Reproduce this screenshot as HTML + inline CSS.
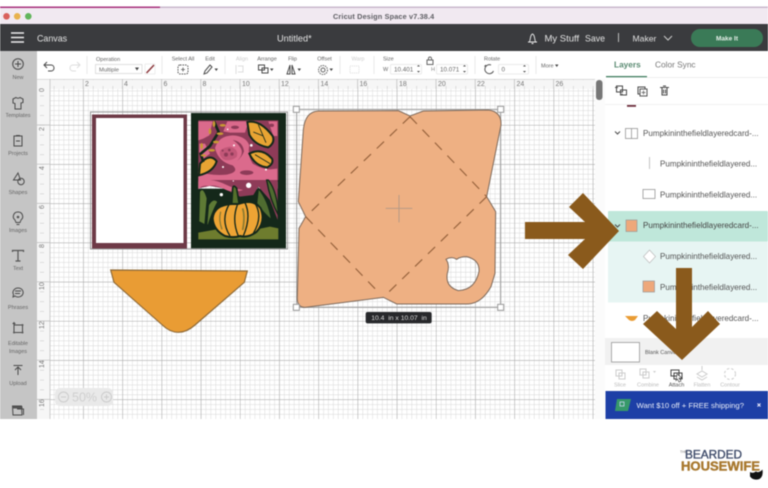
<!DOCTYPE html>
<html><head><meta charset="utf-8"><style>
html,body{margin:0;padding:0;background:#fff;width:768px;height:488px;overflow:hidden}
svg{display:block;filter:blur(.5px)}
text{font-family:"Liberation Sans",sans-serif}
.l{font-size:5.5px;fill:#666}
.s{font-size:5.5px;fill:#666;text-anchor:middle}
.r{font-size:7px;fill:#777}
.p{font-size:8.1px;fill:#555}
.i{fill:none;stroke:#4a4a4a;stroke-width:1}
.t{fill:none;stroke:#666;stroke-width:1}
</style></head><body>
<svg width="768" height="488" viewBox="0 0 768 488" xmlns="http://www.w3.org/2000/svg">
<defs>
<pattern id="mi" x="44" y="85.8" width="4.9" height="4.9" patternUnits="userSpaceOnUse"><path d="M0 0H4.9M0 0V4.9" stroke="#d6d6d6" stroke-width=".9" fill="none"/></pattern>
<pattern id="mj" x="44" y="85.8" width="39.2" height="39.2" patternUnits="userSpaceOnUse"><path d="M0 0H39.2M0 0V39.2" stroke="#a8a8a8" stroke-width="1" fill="none"/></pattern>
<pattern id="tx" x="44" y="80" width="9.8" height="10" patternUnits="userSpaceOnUse"><path d="M0 6V10" stroke="#b8b8b8" stroke-width=".8"/></pattern>
<pattern id="ty" x="44" y="85.8" width="10" height="9.8" patternUnits="userSpaceOnUse"><path d="M6 0H10" stroke="#b8b8b8" stroke-width=".8"/></pattern>
</defs>
<rect width="768" height="488" fill="#fff"/>
<!-- title bar -->
<rect y="7" width="768" height="17" fill="#f1e9f1"/>
<rect y="6.500" width="160" height="1.500" fill="#a8307c"/>
<rect x="160" y="6.500" width="608" height="1.500" fill="#c9b8cc"/>
<circle cx="6.500" cy="16.300" r="3.300" fill="#d9605c"/><circle cx="17.200" cy="16.300" r="3.300" fill="#e8b24e"/><circle cx="28.300" cy="16.300" r="3.300" fill="#62b55c"/>
<text x="333" y="19" font-size="7.300" font-weight="bold" fill="#5f5f64" letter-spacing=".15">Cricut Design Space  v7.38.4</text>
<!-- header -->
<rect y="24" width="768" height="27" fill="#3a3b3e"/>
<path d="M11 33H24M11 37.500H24M11 42H24" stroke="#eee" stroke-width="1.600"/>
<text x="37" y="41.500" font-size="8.900" fill="#e2e2e2">Canvas</text>
<text x="277" y="41.500" font-size="9.200" fill="#e2e2e2">Untitled*</text>
<path d="M528 42h9M529.500 41.500c1-1 .5-7 3-7.500 2.500.5 2 6.500 3 7.500M531.500 43.500h2" fill="none" stroke="#eee" stroke-width=".9"/>
<text x="544.500" y="41.500" font-size="9.500" fill="#e2e2e2">My Stuff</text>
<text x="585" y="41.500" font-size="8.800" fill="#e2e2e2">Save</text>
<rect x="618" y="33" width="1" height="9" fill="#bbb"/>
<text x="632.500" y="41.500" font-size="8.600" fill="#e2e2e2">Maker</text>
<path d="M664 36l4 4 4-4" fill="none" stroke="#ccc" stroke-width="1"/>
<rect x="691" y="29" width="72" height="18" rx="9" fill="#3a7a57"/>
<text x="727" y="40.500" font-size="6.500" font-weight="bold" fill="#e6efe9" text-anchor="middle">Make It</text>
<!-- toolbar -->
<rect y="51" width="605" height="28" fill="#fff"/>
<path d="M47 62l-3 3 3 3M44 65h7c4 0 4 6 0 6h-3" class="i" stroke-width="1.100"/>
<path d="M77 62l3 3-3 3M80 65h-7c-4 0-4 6 0 6h3" fill="none" stroke="#ddd"/>
<path d="M87 56V74M162 56V74M225 56V74M340 56V74M374 56V74M475 56V74M536 56V74" stroke="#e4e4e4" stroke-width=".8"/>
<text x="96" y="61" class="l">Operation</text>
<rect x="95.500" y="64.500" width="46.500" height="9" fill="#fff" stroke="#ccc" stroke-width=".6"/>
<text x="99" y="71.300" font-size="5.800" fill="#666">Multiple</text>
<path d="M135 67.500h4l-2 3z" fill="#444"/>
<rect x="145" y="64" width="10" height="10" fill="#fff" stroke="#ddd" stroke-width=".5"/>
<path d="M146.500 73L154 65" stroke="#8d3a3e" stroke-width="1.500"/>
<text x="183" y="60.500" class="s">Select All</text>
<rect x="178" y="65" width="10" height="9" rx="2" fill="none" stroke="#555" stroke-dasharray="1.500 1"/><path d="M181 69.500h4M183 67.500v4" stroke="#555" stroke-width=".8"/>
<text x="210" y="60.500" class="s">Edit</text>
<path d="M204 74l1-3 5-6 2 2-5 6z" class="i"/><path d="M214.500 68.500h3.500l-1.700 2.500z" fill="#444"/>
<text x="242" y="60.500" class="s" style="fill:#ccc">Align</text>
<path d="M236 65v9M238 66h5v6h-5" fill="none" stroke="#ddd"/>
<text x="267" y="60.500" class="s">Arrange</text>
<rect x="258.500" y="65" width="6" height="5" class="i"/><rect x="262" y="68" width="6" height="5" class="i"/><path d="M270 68.500h3.500l-1.700 2.500z" fill="#444"/>
<text x="292.500" y="60.500" class="s">Flip</text>
<path d="M287 74l3-9v9zM295 74l-3-9v9z" class="i"/><path d="M297.500 68.500h3.500l-1.700 2.500z" fill="#444"/>
<text x="324.500" y="60.500" class="s">Offset</text>
<circle cx="323" cy="70" r="4.500" fill="none" stroke="#666" stroke-dasharray="1.500 .8"/><circle cx="323" cy="70" r="2" class="t"/><path d="M329.500 68.500h3.500l-1.700 2.500z" fill="#444"/>
<text x="358" y="60.500" class="s" style="fill:#ccc">Warp</text>
<rect x="350" y="66" width="9" height="7" fill="none" stroke="#ddd" stroke-dasharray="1 1"/>
<text x="383" y="60.500" class="l">Size</text>
<text x="383" y="71" font-size="5.500" fill="#666">W</text>
<rect x="390.500" y="64.500" width="31" height="9.500" rx="1" fill="#fff" stroke="#e3e3e3" stroke-width=".7"/>
<text x="394" y="71.500" font-size="6.300" fill="#666">10.401</text>
<path d="M417 66.500l1.500-1.500 1.500 1.500zM417 71l1.500 1.500 1.500-1.500z" fill="#444"/>
<rect x="427" y="60" width="6" height="4.500" class="t" stroke-width=".9"/><path d="M428.500 60v-1.500a1.500 1.500 0 0 1 3 0V60" class="t" stroke-width=".8"/>
<text x="431" y="71" font-size="5.500" fill="#888">H</text>
<rect x="436.500" y="64.500" width="31" height="9.500" rx="1" fill="#fff" stroke="#e3e3e3" stroke-width=".7"/>
<text x="440" y="71.500" font-size="6.300" fill="#666">10.071</text>
<path d="M463 66.500l1.500-1.500 1.500 1.500zM463 71l1.500 1.500 1.500-1.500z" fill="#444"/>
<text x="484" y="60.500" class="l">Rotate</text>
<path d="M491 65a4.500 4.500 0 1 0 2.500 6M486 65l-1.500 1.500" fill="none" stroke="#555" stroke-width="1"/>
<rect x="498.500" y="64.500" width="30" height="9.500" rx="1" fill="#fff" stroke="#e3e3e3" stroke-width=".7"/>
<text x="501.500" y="71.500" font-size="6.300" fill="#666">0</text>
<path d="M523 66.500l1.500-1.500 1.500 1.500zM523 71l1.500 1.500 1.500-1.500z" fill="#444"/>
<text x="541" y="67.500" font-size="5.500" fill="#666">More</text><path d="M555 64.500h3.500l-1.700 2.500z" fill="#444"/>
<!-- canvas -->
<rect x="37" y="79" width="568" height="340" fill="#fff"/>
<rect x="50" y="89" width="545" height="330" fill="url(#mi)"/>
<rect x="50" y="89" width="545" height="330" fill="url(#mj)"/>
<rect x="37" y="79" width="558" height="10" fill="#f6f6f6"/>
<rect x="37" y="79" width="13" height="340" fill="#f6f6f6"/>
<rect x="50" y="79" width="545" height="10" fill="url(#tx)"/>
<rect x="37" y="89" width="13" height="330" fill="url(#ty)"/>
<path d="M37 79.300H595" stroke="#ccc" stroke-width=".7"/>
<path d="M50 79V419M83.200 79V89M122.400 79V89M161.600 79V89M200.800 79V89M240 79V89M279.200 79V89M318.400 79V89M357.600 79V89M396.800 79V89M436 79V89M475.200 79V89M514.400 79V89M553.600 79V89M37 125H50M37 164.200H50M37 203.400H50M37 242.600H50M37 281.800H50M37 321H50M37 360.200H50M37 399.400H50" stroke="#bbb" stroke-width=".7"/>
<g class="r"><text x="85" y="86">2</text><text x="124" y="86">4</text><text x="163.500" y="86">6</text><text x="202.500" y="86">8</text><text x="242" y="86">10</text><text x="281" y="86">12</text><text x="320.500" y="86">14</text><text x="359.500" y="86">16</text><text x="399" y="86">18</text><text x="438" y="86">20</text><text x="477" y="86">22</text><text x="516.500" y="86">24</text><text x="555.500" y="86">26</text>
<text transform="translate(44,92) rotate(-90)">0</text><text transform="translate(44,131) rotate(-90)">2</text><text transform="translate(44,170) rotate(-90)">4</text><text transform="translate(44,209) rotate(-90)">6</text><text transform="translate(44,248) rotate(-90)">8</text><text transform="translate(44,290) rotate(-90)">10</text><text transform="translate(44,329) rotate(-90)">12</text><text transform="translate(44,368) rotate(-90)">14</text><text transform="translate(44,407) rotate(-90)">16</text></g>
<rect x="595" y="79" width="10" height="340" fill="#fbfbfb"/>
<rect x="596" y="80" width="6.500" height="20" rx="3" fill="#777"/>
<!-- selection left -->
<rect x="90.500" y="112" width="197" height="137" fill="none" stroke="#999" stroke-width="1"/>
<rect x="92" y="114.500" width="95" height="134" fill="#6e3a47"/>
<rect x="96" y="118" width="87.500" height="125" fill="#fff"/>
<!-- card art upper -->
<g transform="translate(190,112) scale(.3333)">
<rect x="3" y="3" width="285" height="205" fill="#14281a"/>
<rect x="25" y="25" width="240" height="185" fill="#8e3b58"/>
<path d="M25 28H68L58 70 40 80 25 85ZM112 28H172V40L165 62 120 62 100 58ZM235 28H262V72L250 72Z" fill="#db6a8c"/>
<path d="M75 108Q85 72 128 70 168 72 178 100 172 130 188 155 215 172 240 172L262 170V210H25V178Q60 192 110 188 150 180 128 160 85 150 75 108Z" fill="#db6a8c"/>
<path d="M28 120L28 95 45 95 60 125 40 140Z" fill="#db6a8c"/>
<path d="M128 84Q158 88 162 118 156 135 140 148 165 125 150 105 142 92 128 84Z" fill="#8e3b58"/>
<path d="M120 104Q148 112 140 135 120 150 100 142 84 128 92 114 104 106 120 104Z" fill="#c25778"/>
<g fill="#8e3b58"><circle cx="108" cy="128" r="6"/><circle cx="126" cy="126" r="5"/><circle cx="118" cy="114" r="4"/><circle cx="98" cy="116" r="3"/><ellipse cx="135" cy="46" rx="12" ry="5"/><ellipse cx="245" cy="40" rx="7" ry="5"/><ellipse cx="170" cy="182" rx="20" ry="7"/></g>
<path d="M172 30Q210 22 248 72 256 92 235 106 195 100 178 68Z" fill="#e8a433" stroke="#14281a" stroke-width="6"/>
<path d="M205 38L228 92M190 60L220 72" stroke="#14281a" stroke-width="2.500" fill="none"/>
<path d="M178 125Q215 105 246 140 252 155 232 166 195 162 178 125Z" fill="#e8a433" stroke="#14281a" stroke-width="6"/>
<path d="M195 128L240 155" stroke="#14281a" stroke-width="2.500"/>
<path d="M27 190L30 155Q60 122 80 148 70 180 27 190Z" fill="#e8a433" stroke="#14281a" stroke-width="6"/>
<path d="M72 28L86 60 60 102 32 125 40 150" fill="none" stroke="#14281a" stroke-width="8"/>
<g fill="#c89a32"><ellipse cx="72" cy="36" rx="4" ry="9"/><ellipse cx="98" cy="40" rx="9" ry="4"/><ellipse cx="60" cy="58" rx="4" ry="9"/><ellipse cx="90" cy="65" rx="10" ry="4"/><ellipse cx="35" cy="102" rx="4" ry="9"/><ellipse cx="65" cy="115" rx="10" ry="4"/><ellipse cx="40" cy="130" rx="8" ry="3"/><ellipse cx="78" cy="90" rx="9" ry="4"/></g>
<g fill="#fff"><circle cx="113" cy="52" r="2.500"/><circle cx="132" cy="100" r="3"/><circle cx="184" cy="100" r="4"/><circle cx="99" cy="165" r="3"/><circle cx="228" cy="173" r="3"/><circle cx="132" cy="206" r="2"/></g>
</g>
<!-- card art lower -->
<g transform="translate(190,180) scale(.3333)">
<rect x="3" y="26" width="285" height="179" fill="#14281a"/>
<rect x="3" y="0" width="22" height="30" fill="#14281a"/><rect x="263" y="0" width="25" height="30" fill="#14281a"/>
<path d="M25 0H263V120L240 60 205 20 190 45 150 50 100 25 60 18 25 25Z" fill="#8e3b58"/>
<path d="M25 0H60Q85 2 110 15 130 25 160 30 130 40 105 28 75 12 55 18 35 15 25 28Z" fill="#db6a8c"/>
<path d="M160 0H263V22L205 20 190 35 160 30 120 10Z" fill="#8e3b58"/>
<path d="M26 125L28 35Q40 15 52 55L45 135Z" fill="#5e7a35" stroke="#14281a" stroke-width="4"/>
<path d="M50 135L55 75Q70 50 84 65 65 100 55 135Z" fill="#5e7a35" stroke="#14281a" stroke-width="4"/>
<path d="M205 25Q235 60 245 120 220 100 200 70Z" fill="#4f6c30" stroke="#14281a" stroke-width="4"/>
<path d="M235 0Q262 35 265 105 240 60 230 0Z" fill="#4f6c30" stroke="#14281a" stroke-width="4"/>
<path d="M25 178V158L80 148H200L240 140 265 145V178Z" fill="#6e7c2e"/>
<path d="M125 75L128 25Q130 12 140 25L148 75Z" fill="#55702c" stroke="#14281a" stroke-width="5"/>
<path d="M145 72Q190 55 212 85 228 125 200 155 175 175 150 168 130 175 105 168 70 150 68 115 72 75 125 72Z" fill="#eea434" stroke="#14281a" stroke-width="6"/>
<path d="M118 72Q90 120 120 168M165 68Q185 110 160 168M195 70Q220 110 190 160M142 75Q125 120 145 168" fill="none" stroke="#14281a" stroke-width="4"/>
<path d="M158 85Q166 110 158 150" fill="none" stroke="#8c7a30" stroke-width="5"/>
<path d="M92 95Q85 120 96 148" fill="none" stroke="#8c7a30" stroke-width="4"/>
<g fill="#fff"><circle cx="176" cy="16" r="8"/><circle cx="94" cy="44" r="5"/><circle cx="130" cy="3" r="2"/></g>
</g>
<!-- envelope -->
<g transform="translate(285,100) scale(.33333)">
<path d="M35 28H647V622H35Z" fill="none" stroke="#9a9a9a" stroke-width="3"/>
<path fill-rule="evenodd" d="M100 33L340 32 375 48 415 33 610 30Q650 35 648 75L605 290 632 335 630 520 618 560Q590 610 550 612L335 612 295 592 60 622Q35 622 37 590L42 385 62 350 40 305 55 90Q60 35 100 33ZM483 478Q495 495 487 520 480 560 520 572 570 570 582 515 585 480 545 470 525 470 515 478 500 468 483 478Z" fill="#eeb083" stroke="#7e6a5c" stroke-width="3"/>
<path d="M375 50L62 350M375 50L605 290M605 290L295 592M62 350L272 568" stroke="#96623c" stroke-width="3.500" stroke-dasharray="30 24" fill="none"/>
<path d="M302 325H382M342 285V367" stroke="#b89a85" stroke-width="3"/>
<g fill="#fff" stroke="#999" stroke-width="3"><rect x="25" y="19" width="18" height="18"/><rect x="638" y="19" width="18" height="18"/><rect x="25" y="613" width="18" height="18"/><rect x="638" y="613" width="18" height="18"/></g>
<rect x="242" y="636" width="198" height="34" rx="6" fill="#27282b"/>
</g>
<text x="399" y="320" font-size="6.800" fill="#ddd" text-anchor="middle" xml:space="preserve">10.4  in x 10.07  in</text>
<!-- flap -->
<g transform="translate(0,250) scale(.33333)">
<path d="M332 60L742 63 733 97 585 225Q560 247 535 247 510 247 487 225L342 97Z" fill="#e99c34" stroke="#8f6a37" stroke-width="3.500"/>
</g>
<!-- zoom -->
<rect x="55" y="388" width="58" height="18" rx="5" fill="#e9e9e9"/>
<circle cx="63.500" cy="397" r="5" fill="none" stroke="#ccc"/><path d="M61 397h5" stroke="#ccc"/>
<text x="72" y="401.500" font-size="12.500" fill="#cfcfcf">50%</text>
<circle cx="106.500" cy="397" r="5" fill="none" stroke="#ccc"/><path d="M104 397h5M106.500 394.500v5" stroke="#ccc"/>
<!-- sidebar -->
<rect y="51" width="37" height="368" fill="#c5c5c5"/>
<g class="s" style="fill:#666">
<text x="18" y="79">New</text><text x="18" y="117">Templates</text><text x="18" y="155">Projects</text><text x="18" y="194">Shapes</text><text x="18" y="232">Images</text><text x="18" y="270">Text</text><text x="18" y="309">Phrases</text><text x="18" y="345">Editable</text><text x="18" y="353">Images</text><text x="18" y="385">Upload</text>
</g>
<circle cx="18" cy="64" r="5.300" class="i"/><path d="M15 64h6M18 61v6" class="i"/>
<path d="M13 99l3-1.500q2 1.500 4 0l3 1.500v3.500l-2 .5V109h-6v-5.500l-2-.5z" class="i"/>
<rect x="14" y="136" width="8" height="10" class="i"/><path d="M16 135.500h4M16 141h4" class="i"/>
<path d="M18 173l-4.500 7h7z" class="i"/><circle cx="21" cy="181.500" r="3.200" class="i"/>
<path d="M18 212a4.500 4.500 0 0 1 3 8l-1 2.500h-4l-1-2.500a4.500 4.500 0 0 1 3-8zM16.500 224.500h3" class="i"/><circle cx="18" cy="217" r="1.300" fill="#555"/>
<path d="M12.500 252v-1.500h11V252M18 250.500V261M15.500 261h5" fill="none" stroke="#555" stroke-width="1.200"/>
<path d="M18 288a5 4.500 0 1 1-3 8l-2 1 .5-2.500A5 4.500 0 0 1 18 288zM15 291h6M15 293.500h5" class="i"/>
<rect x="14" y="325" width="8.500" height="7.500" class="i"/><path d="M14 322v3M12.500 323.500h3" class="i"/><circle cx="22.500" cy="325" r="1" fill="#555"/><circle cx="14" cy="332.500" r="1" fill="#555"/><circle cx="22.500" cy="332.500" r="1" fill="#555"/>
<path d="M13.500 365.500h9M18 375v-8M15 370l3-3 3 3" class="i"/>
<path d="M12.500 406h9l.5 9h-9zM17 409h6.500v6" class="i"/><path d="M12.500 406.500h10v2h-10z" fill="#555"/>
<!-- right panel -->
<rect x="605" y="51" width="163" height="368" fill="#fff"/>
<text x="614" y="67.500" font-size="8.300" font-weight="bold" fill="#5a8a72">Layers</text>
<text x="655" y="67.500" font-size="8.300" fill="#777">Color Sync</text>
<rect x="606" y="76" width="41" height="1.300" fill="#3f7c5e"/>
<path d="M647 77.500H768" stroke="#e8e8e8" stroke-width=".7"/>
<rect x="616.500" y="86" width="6" height="6" class="i"/><rect x="620.500" y="90" width="6" height="5" class="i"/><path d="M615 87.500h3M622 95.500v-2" class="i"/>
<rect x="638" y="87" width="7" height="7" class="i"/><rect x="640" y="89" width="7" height="7" fill="#fff" stroke="#555"/><path d="M641.500 92.500h4M643.500 90.500v4" stroke="#555" stroke-width=".7"/>
<path d="M660 87.500h9M662 87.500v7.500h5v-7.500M663 86h3M663.500 89.500v4M665.500 89.500v4" class="i"/>
<path d="M605 104.500H768" stroke="#ededed" stroke-width=".8"/>
<rect x="627" y="105" width="9" height="1.800" fill="#6e2f3e"/>
<path d="M615 131.500l2.500 2.500 2.500-2.500" class="i"/>
<rect x="625.500" y="128.500" width="12" height="10" fill="none" stroke="#888" stroke-width=".7"/><path d="M631.500 128.500v10" stroke="#888" stroke-width=".7"/>
<text x="643" y="136" class="p">Pumpkininthefieldlayeredcard-...</text>
<path d="M649.500 157v12" stroke="#aaa" stroke-width=".7"/>
<text x="660" y="166.500" class="p">Pumpkininthefieldlayered...</text>
<rect x="643" y="189.500" width="12" height="9" fill="#fff" stroke="#888" stroke-width=".7"/>
<text x="660" y="197.500" class="p">Pumpkininthefieldlayered...</text>
<rect x="608" y="211" width="160" height="30.500" fill="#bfe7da" rx="1"/>
<rect x="608" y="241.500" width="160" height="61" fill="#e7f5f3"/>
<path d="M615 224.500l2.500 2.500 2.500-2.500" class="i"/>
<rect x="626" y="220" width="11" height="11.500" fill="#eea87a" stroke="#999" stroke-width=".7"/>
<text x="643" y="228" class="p" style="fill:#444">Pumpkininthefieldlayeredcard-...</text>
<path d="M649.500 250l6 6.500-6 6.500-6-6.500z" fill="#fff" stroke="#bbb" stroke-width=".7"/>
<text x="660" y="259" class="p">Pumpkininthefieldlayered...</text>
<rect x="643" y="281" width="11.500" height="11" fill="#eea87a" stroke="#999" stroke-width=".7"/>
<text x="660" y="290" class="p">Pumpkininthefieldlayered...</text>
<path d="M625 316h13l-3 4q-3 2-6 0z" fill="#e99c34"/>
<text x="643" y="321" class="p">Pumpkininthefieldlayeredcard-...</text>
<rect x="605" y="338" width="163" height="27" fill="#f1f1f1"/>
<rect x="611.500" y="342.500" width="28" height="19.500" fill="#fff" stroke="#8a8a8a" stroke-width=".7"/>
<text x="645" y="354" font-size="5.500" fill="#555">Blank Canvas</text>
<g class="s" style="fill:#bbb"><text x="620" y="386.500">Slice</text><text x="648" y="386.500">Combine</text><text x="676.500" y="386.500" style="fill:#555">Attach</text><text x="702" y="386.500">Flatten</text><text x="730" y="386.500">Contour</text></g>
<rect x="616" y="370" width="6" height="6" fill="none" stroke="#ccc"/><rect x="619" y="373" width="6" height="6" fill="none" stroke="#ccc"/>
<rect x="640" y="369" width="6" height="6" fill="none" stroke="#ccc"/><rect x="643" y="372" width="6" height="6" fill="none" stroke="#ccc"/><path d="M653 371h3l-1.500 2z" fill="#ccc"/>
<rect x="671" y="370" width="8" height="6" fill="none" stroke="#444"/><rect x="674" y="373" width="8" height="6" fill="none" stroke="#444"/><path d="M677 374l5 4-3 0 2 3-2 1-1.500-3-1.500 1.500z" fill="#fff" stroke="#333" stroke-width=".6"/>
<path d="M697 374l5 3 5-3-5-3zM697 377l5 3 5-3M702 366v4" fill="none" stroke="#ccc"/>
<circle cx="730" cy="374" r="5.500" fill="none" stroke="#ccc" stroke-dasharray="2.500 2"/>
<rect x="605.500" y="391" width="162.500" height="28" fill="#1d3fa6"/>
<path d="M617 399h14l-3 12h-13z" fill="#37996a"/><rect x="620" y="402" width="4" height="4" fill="none" stroke="#ddf" stroke-width=".7"/>
<text x="636.500" y="408" font-size="7.700" fill="#e8ecf8">Want $10 off + FREE shipping?</text>
<path d="M757.500 403.500l3 3M760.500 403.500l-3 3" stroke="#eef" stroke-width="1"/>
<!-- arrows -->
<polygon points="525,222 585,222 569,207 583,193 619,231 583,269 568,255 585,239 525,239" fill="#8a5a1c"/>
<polygon points="676,268 692,268 692,327 708,311 720,324 682,360 643,324 657,311 676,329" fill="#8a5a1c"/>
<!-- logo -->
<text x="680" y="453" font-size="3.500" fill="#777">THE</text>
<text x="685" y="458.500" font-size="12" fill="#3d4a69" stroke="#3d4a69" stroke-width=".35" textLength="57" lengthAdjust="spacingAndGlyphs">BEARDED</text>
<text x="681" y="470.500" font-size="13" font-weight="bold" fill="#a8782e" stroke="#a8782e" stroke-width=".4" textLength="79" lengthAdjust="spacingAndGlyphs">HOUSEWIFE</text>
<path d="M750 472q2.500 1.500 5 0 1-1 2 0 3 .5 5.500-2.500 1 7-3 9.500-6 2-9.500-2.500z" fill="#111"/>
</svg>
</body></html>
